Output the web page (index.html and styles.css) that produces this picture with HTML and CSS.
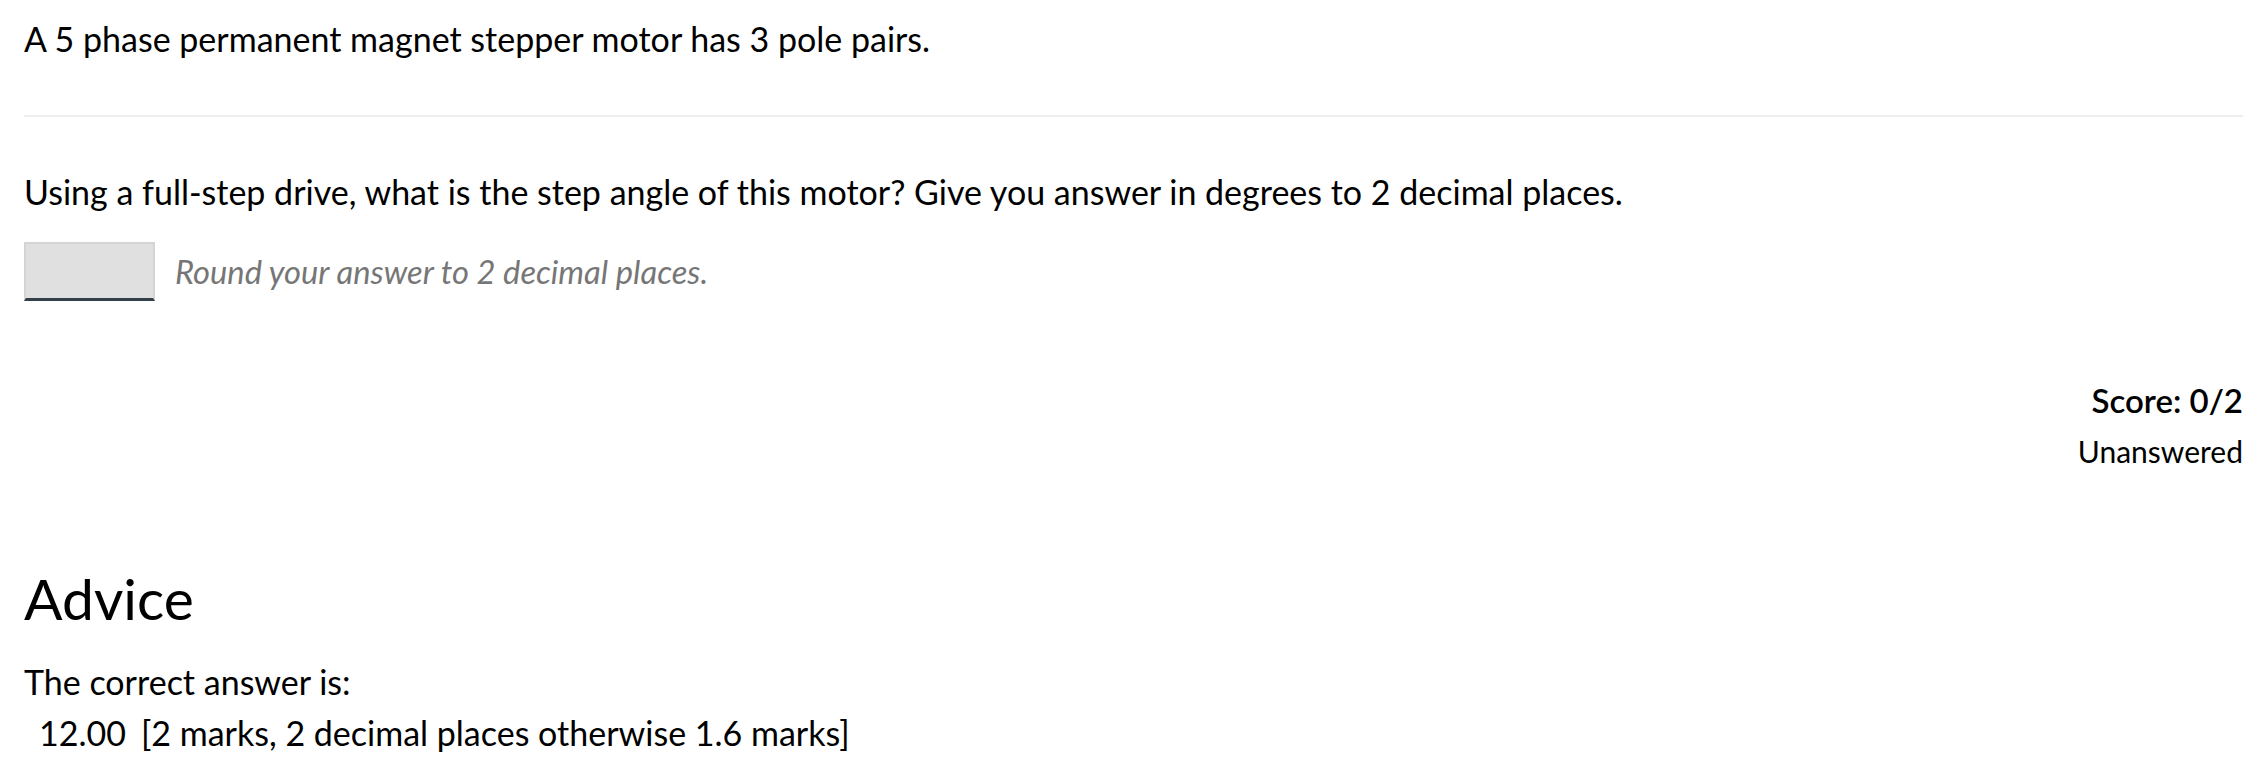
FILE: index.html
```html
<!DOCTYPE html>
<html lang="en">
<head>
<meta charset="utf-8">
<title>Question</title>
<link rel="stylesheet" href="styles.css">
</head>
<body>
<main class="question">
  <p class="statement">A 5 phase permanent magnet stepper motor has 3 pole pairs.</p>
  <hr class="divider">
  <p class="prompt">Using a full-step drive, what is the step angle of this motor? Give you answer in degrees to 2 decimal places.</p>
  <div class="answer-row">
    <input class="answer-input" type="text" aria-label="Answer">
    <span class="hint">Round your answer to 2 decimal places.</span>
  </div>
  <div class="score">
    <div class="score-value">Score: 0/2</div>
    <div class="score-status">Unanswered</div>
  </div>
  <section class="advice">
    <h2 class="advice-title">Advice</h2>
    <p class="advice-line">The correct answer is:</p>
    <p class="advice-line"><span class="answer-value">12.00</span>[2 marks, 2 decimal places otherwise 1.6 marks]</p>
    <p class="advice-line muted">the step angle is found from the number of phases and the pole pairs of the motor</p>
  </section>
</main>
</body>
</html>
```

FILE: styles.css
```css
html, body {
  margin: 0;
  padding: 0;
  background: #ffffff;
}

body {
  font-family: Lato, "Noto Sans", sans-serif;
  color: #000000;
  font-size: 34px;
  line-height: 51px;
}

.question {
  padding: 13px 21px 0 24px;
}

.statement {
  margin: 0;
}

.divider {
  border: 0;
  border-top: 2px solid #eeeeee;
  margin: 51px 0 0 0;
  height: 0;
}

.prompt {
  margin: 49px 0 0 0;
}

.answer-row {
  display: flex;
  align-items: center;
  gap: 20px;
  margin-top: 25px;
}

.answer-input {
  box-sizing: border-box;
  width: 131px;
  height: 59px;
  margin: 0;
  padding: 0 8px;
  background: #e0e0e0;
  border: 2px solid #d4d4d4;
  border-bottom: 3px solid #323e48;
  border-radius: 0;
  font: inherit;
}

.hint {
  font-size: 32.7px;
  font-style: italic;
  color: #767676;
}

.score {
  margin-top: 74px;
  text-align: right;
}

.score-value {
  font-size: 33px;
  font-weight: 600;
}

.score-status {
  font-size: 30px;
}

.advice-title {
  margin: 85px 0 0 0;
  font-size: 57px;
  font-weight: 400;
  line-height: 72px;
}

.advice-line {
  margin: 0;
}

.advice-title + .advice-line {
  margin-top: 22px;
}

.answer-value {
  display: inline-block;
  margin-left: 15px;
  margin-right: 15px;
}

.muted {
  margin-top: 3px;
  padding-left: 190px;
  color: #888888;
}
```
